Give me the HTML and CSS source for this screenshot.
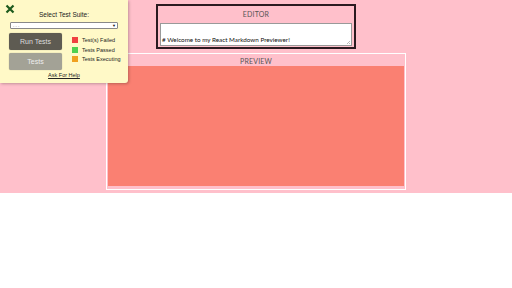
FILE: index.html
```html
<!DOCTYPE html>
<html>
<head>
<meta charset="utf-8">
<link rel="stylesheet" href="styles.css">
</head>
<body>
<div class="app">
  <div class="editor-wrap">
    <div class="title">EDITOR</div>
    <div class="editor">
      <span class="etext"># Welcome to my React Markdown Previewer!</span>
      <svg class="grip" width="5" height="5" viewBox="0 0 5 5"><path d="M4 1 L1 4 M4 3 L3 4" stroke="#aaa" stroke-width="0.8"/></svg>
    </div>
  </div>
  <div class="preview-wrap">
    <div class="title ptitle">PREVIEW</div>
    <div class="preview"></div>
  </div>
</div>
<div class="suite">
  <svg class="close" width="10" height="10" viewBox="0 0 10 10"><path d="M1.5 1.5 L8.5 8.5 M8.5 1.5 L1.5 8.5" stroke="#1d5a1d" stroke-width="2.2"/></svg>
  <div class="suite-label">Select Test Suite:</div>
  <div class="select"><span class="dots">- - -</span><span class="caret">&#9660;</span></div>
  <div class="suite-body">
    <div class="buttons">
      <div class="btn run">Run Tests</div>
      <div class="btn tests">Tests</div>
    </div>
    <div class="legend">
      <div class="item"><span class="sq red"></span>Test(s) Failed</div>
      <div class="item"><span class="sq green"></span>Tests Passed</div>
      <div class="item"><span class="sq orange"></span>Tests Executing</div>
    </div>
  </div>
  <div class="help">Ask For Help</div>
</div>
</body>
</html>
```

FILE: styles.css
```css
html, body { margin: 0; padding: 0; background: #fff; }
body { font-family: Lato, "Noto Sans", sans-serif; }
.app {
  background: #ffc0cb;
  height: 193px;
  padding-top: 4px;
  box-sizing: border-box;
  display: flex;
  flex-direction: column;
  align-items: center;
  gap: 4px;
}
.editor-wrap {
  width: 200px;
  height: 45px;
  box-sizing: border-box;
  border: 2px solid #2b1a20;
  display: flex;
  flex-direction: column;
  align-items: center;
}
.title {
  font-size: 7px;
  color: #555;
  height: 17px;
  line-height: 16px;
  letter-spacing: 0.2px;
}
.editor {
  position: relative;
  width: 192px;
  height: 23px;
  box-sizing: border-box;
  background: #fff;
  border: 1px solid #999;
  font-size: 6.3px;
  color: #111;
  display: flex;
  align-items: flex-end;
  padding: 0 0 2px 1px;
}
.grip { position: absolute; right: 0; bottom: 0; }
.preview-wrap {
  width: 300px;
  height: 137px;
  box-sizing: border-box;
  border: 1px solid #fff;
  display: flex;
  flex-direction: column;
  align-items: center;
  padding: 0 1px 3px;
}
.ptitle { height: 12px; line-height: 14px; }
.preview {
  width: 100%;
  flex: 1;
  background: #fa8072;
}
.suite {
  position: absolute;
  left: 0;
  top: 0;
  width: 128px;
  height: 83px;
  background: #fff9c7;
  box-shadow: 1px 1px 3px rgba(0,0,0,0.25);
  border-bottom-right-radius: 3px;
  font-family: "Liberation Sans", Arial, sans-serif;
  font-size: 6px;
  color: #222;
  box-sizing: border-box;
  padding-top: 11px;
}
.close { position: absolute; left: 5px; top: 4px; }
.suite-label { text-align: center; font-size: 6.5px; height: 11px; line-height: 8px; }
.select {
  margin: 0 10px;
  height: 7px;
  background: #fff;
  border: 1px solid #888;
  border-radius: 1px;
  box-sizing: border-box;
  display: flex;
  justify-content: space-between;
  align-items: center;
  font-size: 4px;
  padding: 0 1px 0 2px;
  color: #444;
}
.caret { font-size: 4px; color: #111; }
.suite-body {
  display: flex;
  margin-top: 4px;
  padding-left: 9px;
  gap: 10px;
}
.buttons { display: flex; flex-direction: column; gap: 3px; }
.btn {
  width: 53px;
  height: 17px;
  border-radius: 2px;
  display: flex;
  align-items: center;
  justify-content: center;
  font-size: 7px;
  box-shadow: 0 0 1px rgba(0,0,0,0.4);
}
.run { background: #5e5b52; color: #ddd; }
.tests { background: #a3a296; color: #eee; }
.legend { display: flex; flex-direction: column; gap: 2.5px; padding-top: 3.5px; }
.item { display: flex; align-items: center; gap: 4px; height: 7px; font-size: 5.5px; color: #222; }
.sq { width: 6px; height: 6px; display: inline-block; }
.red { background: #f04040; }
.green { background: #50d050; }
.orange { background: #f0a020; }
.help {
  text-align: center;
  margin-top: 2px;
  font-size: 5.5px;
  text-decoration: underline;
}
```
